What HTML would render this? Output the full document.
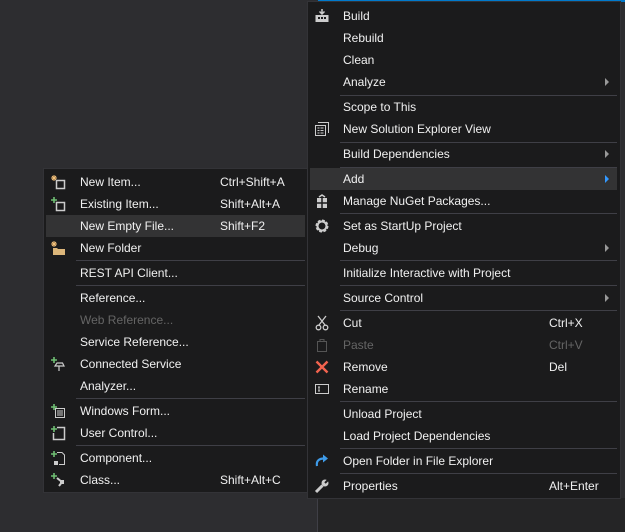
<!DOCTYPE html>
<html><head><meta charset="utf-8"><style>
*{margin:0;padding:0;box-sizing:border-box}
body{width:625px;height:532px;background:#2d2d30;position:relative;overflow:hidden;font-family:"Liberation Sans",sans-serif;font-size:12px;color:#f1f1f1}
.m{position:absolute;background:#1b1b1c;border:1px solid #333337}
.i{position:absolute;left:0;right:0;height:22px;line-height:22px;white-space:nowrap}
.i .t{position:absolute}
.i .k{position:absolute}
.hl{background:#333334}
.sep{position:absolute;height:1px;background:#3f3f46}
.d{color:#656565}
.ar{position:absolute;width:0;height:0;border-top:4px solid transparent;border-bottom:4px solid transparent;border-left:4px solid #999;top:7px}
.ic{position:absolute;top:3px;width:16px;height:16px}
#R .t{left:35px}#R .k{left:241px}#R .ar{left:297px}#R .ic{left:6px}
#L .t{left:36px}#L .k{left:176px}#L .ic{left:6px}
</style></head><body>
<div style="position:absolute;left:318px;top:0;width:307px;height:2px;background:#007acc"></div>
<div style="position:absolute;left:317px;top:498px;width:1px;height:34px;background:#3f3f46"></div>
<div style="position:absolute;left:318px;top:498px;width:307px;height:34px;background:#252526"></div>

<div class="m" id="R" style="left:307px;top:1px;width:314px;height:498px">
<div class="i" style="top:3px"><svg class="ic" viewBox="0 0 16 16"><path d="M8 1v5M5.5 3.5L8 6l2.5-2.5" stroke="#ccc" fill="none" stroke-width="1.5"/><rect x="1.5" y="7" width="13" height="7" fill="#ccc"/><rect x="4" y="9" width="2" height="2" fill="#1b1b1c"/><rect x="7" y="9" width="2" height="2" fill="#1b1b1c"/><rect x="10" y="9" width="2" height="2" fill="#1b1b1c"/></svg><span class="t">Build</span></div>
<div class="i" style="top:25px"><span class="t">Rebuild</span></div>
<div class="i" style="top:47px"><span class="t">Clean</span></div>
<div class="i" style="top:69px"><span class="t">Analyze</span><span class="ar"></span></div>
<div class="sep" style="left:32px;right:3px;top:93px"></div>
<div class="i" style="top:94px"><span class="t">Scope to This</span></div>
<div class="i" style="top:116px"><svg class="ic" viewBox="0 0 16 16"><rect x="1.5" y="4.5" width="10" height="10" fill="none" stroke="#ccc"/><path d="M4 1.5h10.5V12" stroke="#ccc" fill="none"/><path d="M3.5 7h2M6.5 7h3M3.5 9.5h2M6.5 9.5h3M3.5 12h2M6.5 12h3" stroke="#ccc"/></svg><span class="t">New Solution Explorer View</span></div>
<div class="sep" style="left:32px;right:3px;top:140px"></div>
<div class="i" style="top:141px"><span class="t">Build Dependencies</span><span class="ar"></span></div>
<div class="sep" style="left:32px;right:3px;top:165px"></div>
<div class="i hl" style="top:166px;left:2px;right:3px"><span class="t" style="left:33px">Add</span><span class="ar" style="left:295px;border-left-color:#3399ff"></span></div>
<div class="i" style="top:188px"><svg class="ic" viewBox="0 0 16 16"><rect x="3" y="5" width="10" height="10" fill="#ccc"/><path d="M8 5v10M3 10h10" stroke="#1b1b1c" stroke-width="1.5"/><path d="M5 4l3-2 3 2" stroke="#ccc" fill="none" stroke-width="1.5"/></svg><span class="t">Manage NuGet Packages...</span></div>
<div class="sep" style="left:32px;right:3px;top:211px"></div>
<div class="i" style="top:213px"><svg class="ic" viewBox="0 0 16 16"><circle cx="8" cy="8" r="5" fill="none" stroke="#ccc" stroke-width="3" stroke-dasharray="2.5 1.4"/><circle cx="8" cy="8" r="4.5" fill="none" stroke="#ccc" stroke-width="2"/></svg><span class="t">Set as StartUp Project</span></div>
<div class="i" style="top:235px"><span class="t">Debug</span><span class="ar"></span></div>
<div class="sep" style="left:32px;right:3px;top:258px"></div>
<div class="i" style="top:260px"><span class="t">Initialize Interactive with Project</span></div>
<div class="sep" style="left:32px;right:3px;top:283px"></div>
<div class="i" style="top:285px"><span class="t">Source Control</span><span class="ar"></span></div>
<div class="sep" style="left:32px;right:3px;top:308px"></div>
<div class="i" style="top:310px"><svg class="ic" viewBox="0 0 16 16"><path d="M4 1l7 9M12 1L5 10" stroke="#ccc" stroke-width="1.3"/><circle cx="4.5" cy="12.5" r="2.3" fill="none" stroke="#ccc" stroke-width="1.3"/><circle cx="11.5" cy="12.5" r="2.3" fill="none" stroke="#ccc" stroke-width="1.3"/></svg><span class="t">Cut</span><span class="k">Ctrl+X</span></div>
<div class="i d" style="top:332px"><svg class="ic" viewBox="0 0 16 16"><path d="M3.5 14.5v-10h9v10zM6 4.5V2.5h4v2" stroke="#555" fill="none"/></svg><span class="t">Paste</span><span class="k">Ctrl+V</span></div>
<div class="i" style="top:354px"><svg class="ic" viewBox="0 0 16 16"><path d="M2.5 2.5l11 11M13.5 2.5l-11 11" stroke="#f2634e" stroke-width="2.4"/></svg><span class="t">Remove</span><span class="k">Del</span></div>
<div class="i" style="top:376px"><svg class="ic" viewBox="0 0 16 16"><rect x="1.5" y="3.5" width="13" height="9" fill="none" stroke="#ccc"/><path d="M4 6h2M5 6v4M4 10h2" stroke="#ccc"/></svg><span class="t">Rename</span></div>
<div class="sep" style="left:32px;right:3px;top:399px"></div>
<div class="i" style="top:401px"><span class="t">Unload Project</span></div>
<div class="i" style="top:423px"><span class="t">Load Project Dependencies</span></div>
<div class="sep" style="left:32px;right:3px;top:446px"></div>
<div class="i" style="top:448px"><svg class="ic" viewBox="0 0 16 16"><path d="M3 13C2 8 5 5.5 10 5.5" stroke="#3e9be9" stroke-width="2.2" fill="none"/><path d="M9 1.5l5 4-5 4z" fill="#3e9be9"/></svg><span class="t">Open Folder in File Explorer</span></div>
<div class="sep" style="left:32px;right:3px;top:471px"></div>
<div class="i" style="top:473px"><svg class="ic" viewBox="0 0 16 16"><path d="M2 14l6.5-6.5" stroke="#ccc" stroke-width="3"/><circle cx="11" cy="5" r="3.5" fill="#ccc"/><path d="M11 5l3-3" stroke="#1b1b1c" stroke-width="2"/></svg><span class="t">Properties</span><span class="k">Alt+Enter</span></div>
</div>

<div class="m" id="L" style="left:43px;top:168px;width:265px;height:325px">
<div class="i" style="top:2px"><svg class="ic" viewBox="0 0 16 16"><path d="M4 1v6M1 4h6M2 2l4 4M6 2l-4 4" stroke="#f5c27a" stroke-width="1"/><rect x="6.5" y="6.5" width="8" height="8" fill="none" stroke="#ccc" stroke-width="1.5"/></svg><span class="t">New Item...</span><span class="k">Ctrl+Shift+A</span></div>
<div class="i" style="top:24px"><svg class="ic" viewBox="0 0 16 16"><path d="M4 1v6M1 4h6" stroke="#6fbf73" stroke-width="1.6"/><rect x="6.5" y="6.5" width="8" height="8" fill="none" stroke="#ccc" stroke-width="1.5"/></svg><span class="t">Existing Item...</span><span class="k">Shift+Alt+A</span></div>
<div class="i hl" style="top:46px;left:2px;right:2px"><span class="t" style="left:34px">New Empty File...</span><span class="k" style="left:174px">Shift+F2</span></div>
<div class="i" style="top:68px"><svg class="ic" viewBox="0 0 16 16"><path d="M4 1v6M1 4h6M2 2l4 4M6 2l-4 4" stroke="#f5c27a"/><path d="M3 8h4l1 1h7v6H3z" fill="#dcb67a"/></svg><span class="t">New Folder</span></div>
<div class="sep" style="left:32px;right:2px;top:91px"></div>
<div class="i" style="top:93px"><span class="t">REST API Client...</span></div>
<div class="sep" style="left:32px;right:2px;top:116px"></div>
<div class="i" style="top:118px"><span class="t">Reference...</span></div>
<div class="i d" style="top:140px"><span class="t">Web Reference...</span></div>
<div class="i" style="top:162px"><span class="t">Service Reference...</span></div>
<div class="i" style="top:184px"><svg class="ic" viewBox="0 0 16 16"><path d="M4 1v6M1 4h6" stroke="#6fbf73" stroke-width="1.6"/><path d="M5 10h9l-1.5-3H7zM9 10v5" stroke="#ccc" fill="none" stroke-width="1.2"/></svg><span class="t">Connected Service</span></div>
<div class="i" style="top:206px"><span class="t">Analyzer...</span></div>
<div class="sep" style="left:32px;right:2px;top:229px"></div>
<div class="i" style="top:231px"><svg class="ic" viewBox="0 0 16 16"><path d="M4 1v6M1 4h6" stroke="#6fbf73" stroke-width="1.6"/><rect x="5.5" y="5.5" width="9" height="9" fill="none" stroke="#ccc"/><path d="M7 8h6M7 10h6M7 12h6" stroke="#ccc"/></svg><span class="t">Windows Form...</span></div>
<div class="i" style="top:253px"><svg class="ic" viewBox="0 0 16 16"><path d="M4 1v6M1 4h6" stroke="#6fbf73" stroke-width="1.6"/><path d="M7 2.5h7.5v12h-11V8" stroke="#ccc" fill="none" stroke-width="1.5"/></svg><span class="t">User Control...</span></div>
<div class="sep" style="left:32px;right:2px;top:276px"></div>
<div class="i" style="top:278px"><svg class="ic" viewBox="0 0 16 16"><path d="M4 1v6M1 4h6" stroke="#6fbf73" stroke-width="1.6"/><path d="M7 2.5h5l2.5 2.5v9.5H9" stroke="#ccc" fill="none"/><rect x="4" y="11" width="4" height="4" fill="#ccc"/></svg><span class="t">Component...</span></div>
<div class="i" style="top:300px"><svg class="ic" viewBox="0 0 16 16"><path d="M4 1v6M1 4h6" stroke="#6fbf73" stroke-width="1.6"/><path d="M7 6l5 4-3 4" stroke="#ccc" fill="none" stroke-width="2"/><rect x="10" y="8" width="4" height="4" fill="#ccc"/></svg><span class="t">Class...</span><span class="k">Shift+Alt+C</span></div>
</div>
</body></html>
